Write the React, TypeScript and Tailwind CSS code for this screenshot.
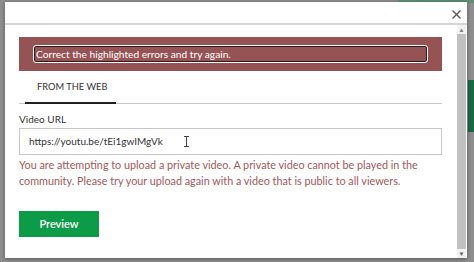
import React from "react";

const font = { fontFamily: "Lato, 'Open Sans', sans-serif" };

export default function App() {
  return (
    <div className="relative w-[474px] h-[262px] overflow-hidden bg-[#8e8e8e]" style={font}>
      {/* bits of the page behind the overlay */}
      <div className="absolute right-0 top-0 w-[76px] h-[3px] bg-[#5f8f74]" />
      <div className="absolute right-0 top-[80px] w-[6px] h-[52px] bg-[#176a41]" />

      <div className="absolute left-[5px] top-[2px] w-[462px] h-[256px] bg-white flex flex-col shadow-[0_1px_4px_rgba(0,0,0,0.4)]">
        <div className="h-[23px] shrink-0 flex items-center justify-end pr-[6px] border-b-2 border-[#d4d4d4]">
          <svg width="9" height="9" viewBox="0 0 9 9" className="mt-[3px]">
            <path d="M0.5 0.5 L8.5 8.5 M8.5 0.5 L0.5 8.5" stroke="#555" strokeWidth="1.3" />
          </svg>
        </div>

        <div className="flex flex-1 min-h-0">
          <div className="flex-1 pl-[14px] pr-[15px] pt-[12px]">
            <div className="h-[34px] bg-[#955353] pl-[15px] pr-[15px] pt-[9px]">
              <div className="h-[16px] border border-[#2a1a1a] outline outline-1 outline-white rounded-[2px] flex items-center pl-[1px] text-white text-[10.2px] leading-none">
                Correct the highlighted errors and try again.
              </div>
            </div>

            <div className="h-[33px] border-b border-[#c8c8c8] flex">
              <div className="w-[91px] ml-[6px] flex items-center pl-[12px] pt-[1px] whitespace-nowrap text-[9.3px] text-[#333] border-b-2 border-[#222] mb-[-1px]">
                FROM THE WEB
              </div>
            </div>

            <div className="mt-[8px] text-[10px] text-[#333] leading-[14px]">Video URL</div>
            <div className="mt-[2px] h-[27px] border border-[#c8c8c8] flex items-center pl-[9px] text-[10px] text-[#333]">
              <span>https://youtu.be/tEi1gwIMgVk</span>
              <svg width="5" height="11" viewBox="0 0 5 11" className="ml-[21px]">
                <path d="M0 0.5 H5 M0 10.5 H5 M2.5 0.5 V10.5" stroke="#444" strokeWidth="1" />
              </svg>
            </div>
            <div className="mt-[2px] w-[400px] text-[10.8px] leading-[16px] text-[#a2585a]">
              You are attempting to upload a private video. A private video cannot be played in the community. Please try your upload again with a video that is public to all viewers.
            </div>

            <div className="mt-[22px] w-[80px] h-[26px] bg-[#0c9c48] text-white text-[11px] font-semibold flex items-center justify-center">
              Preview
            </div>
          </div>

          <div className="w-[9px] mr-[1px] bg-[#f1f1f1] flex flex-col">
            <div className="h-[9px] flex items-center justify-center text-[6px] text-[#777]">▲</div>
            <div className="flex-1 bg-[#c1c1c1]" />
            <div className="h-[9px] flex items-center justify-center text-[6px] text-[#555]">▼</div>
          </div>
        </div>
      </div>
    </div>
  );
}
